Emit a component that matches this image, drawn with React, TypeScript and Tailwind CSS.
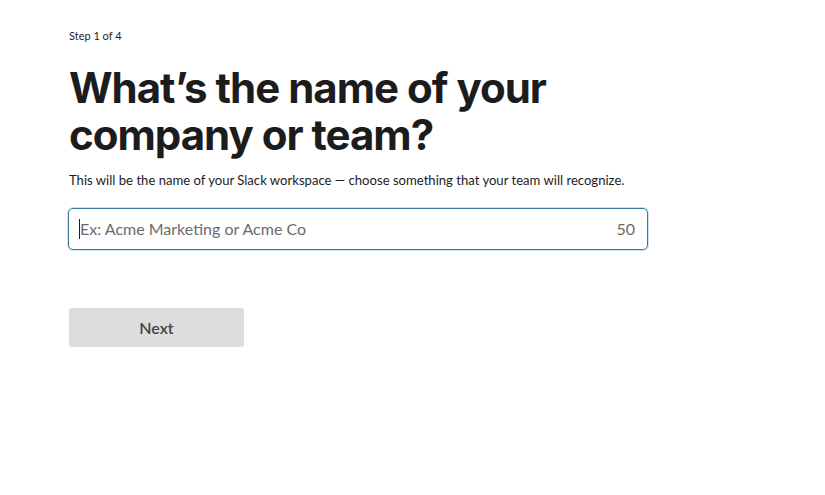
export default function App() {
  return (
    <div className="w-[825px] h-[495px] bg-white text-[#1d1c1d]" style={{ fontFamily: "Lato, 'Liberation Sans', sans-serif" }}>
      <div className="pl-[69px] pt-[29px] w-[650px]">
        <div className="text-[11px] leading-[14px] text-[#1d1c1d]">Step 1 of 4</div>
        <h1
          className="mt-[21px] text-[42px] leading-[47px] font-bold tracking-[-1px] text-[#1d1c1d]"
          style={{ fontFamily: "Inter, 'Noto Sans', sans-serif" }}
        >
          What’s the name of your
          <br />
          company or team?
        </h1>
        <p className="mt-[13px] text-[13.1px] leading-[18px] text-[#1d1c1d]">
          This will be the name of your Slack workspace — choose something that your team will recognize.
        </p>
        <div className="mt-[18px] w-[582px] h-[44px] rounded-[6px] p-[1px] bg-[#c6e4f0] -ml-[2px]">
          <div className="h-full rounded-[5px] border border-[#3f7a96] bg-white flex items-center pl-[10px] pr-[12px]">
            <span className="w-[1px] h-[20px] bg-[#1d1c1d]" />
            <span className="flex-1 text-[16px] text-[#6b6b6b]">Ex: Acme Marketing or Acme Co</span>
            <span className="text-[16px] text-[#6b6b6b]">50</span>
          </div>
        </div>
        <button className="mt-[57px] w-[175px] h-[39px] rounded-[3px] bg-[#dddddd] text-[16px] font-semibold text-[#454245]">
          Next
        </button>
      </div>
    </div>
  );
}
